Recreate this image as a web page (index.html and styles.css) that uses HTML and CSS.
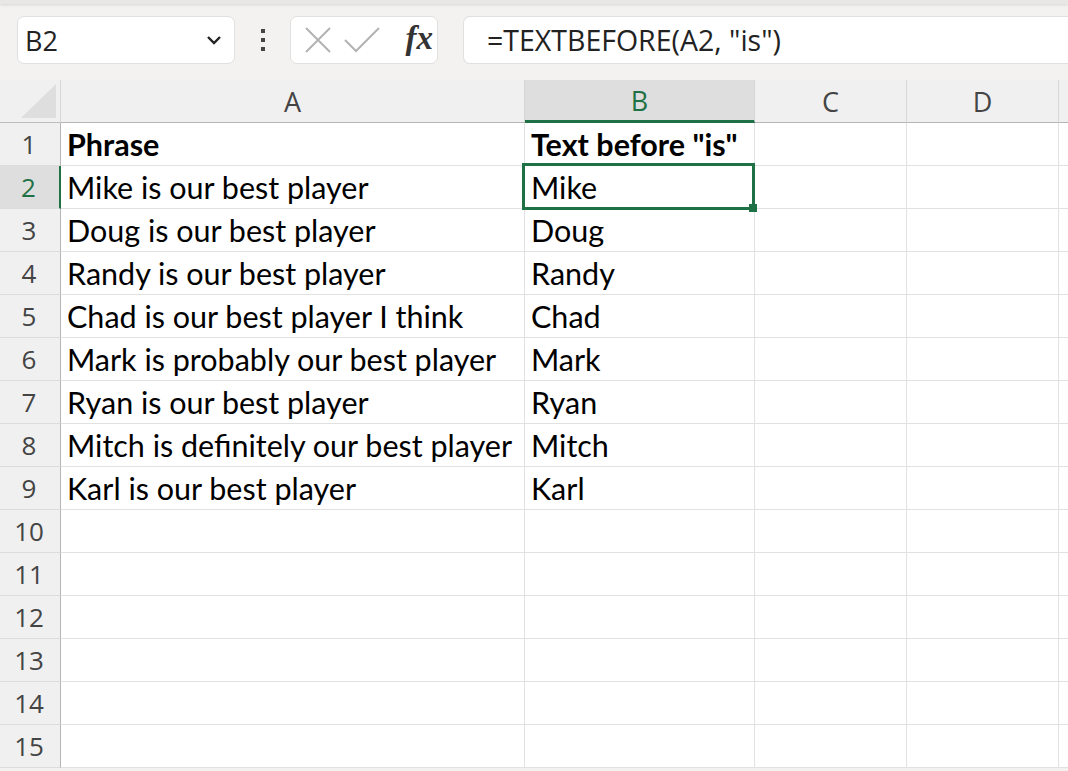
FILE: index.html
```html
<!DOCTYPE html>
<html lang="en">
<head>
  <meta charset="UTF-8">
  <title>TEXTBEFORE</title>
  <link rel="stylesheet" href="styles.css">
</head>
<body>
  <div class="topband"></div>
  <div class="toolbar">
    <div class="namebox">
      <span>B2</span>
      <svg class="chev" width="16" height="10" viewBox="0 0 16 10"><path d="M2 2 L8 8 L14 2" fill="none" stroke="#222" stroke-width="2.4"/></svg>
    </div>
    <div class="dots"><i></i><i></i><i></i></div>
    <div class="fxbox">
      <svg width="30" height="30" viewBox="0 0 30 30"><path d="M3 3 L27 27 M27 3 L3 27" stroke="#b3b3b3" stroke-width="2"/></svg>
      <svg width="38" height="30" viewBox="0 0 38 30"><path d="M2 15 L13 26 L36 3" fill="none" stroke="#b3b3b3" stroke-width="2"/></svg>
      <span class="fx">fx</span>
    </div>
    <div class="formula">=TEXTBEFORE(A2, "is")</div>
  </div>

  <div class="sheet">
    <div class="grid">
      <div class="corner"><div class="tri"></div></div>
      <div class="colh">A</div>
      <div class="colh sel">B</div>
      <div class="colh">C</div>
      <div class="colh">D</div>
      <div class="colh last"></div>

      <div class="rowh">1</div><div class="cell b">Phrase</div><div class="cell b">Text before "is"</div><div class="cell"></div><div class="cell"></div><div class="cell"></div>
      <div class="rowh sel">2</div><div class="cell">Mike is our best player</div><div class="cell">Mike</div><div class="cell"></div><div class="cell"></div><div class="cell"></div>
      <div class="rowh">3</div><div class="cell">Doug is our best player</div><div class="cell">Doug</div><div class="cell"></div><div class="cell"></div><div class="cell"></div>
      <div class="rowh">4</div><div class="cell">Randy is our best player</div><div class="cell">Randy</div><div class="cell"></div><div class="cell"></div><div class="cell"></div>
      <div class="rowh">5</div><div class="cell">Chad is our best player I think</div><div class="cell">Chad</div><div class="cell"></div><div class="cell"></div><div class="cell"></div>
      <div class="rowh">6</div><div class="cell">Mark is probably our best player</div><div class="cell">Mark</div><div class="cell"></div><div class="cell"></div><div class="cell"></div>
      <div class="rowh">7</div><div class="cell">Ryan is our best player</div><div class="cell">Ryan</div><div class="cell"></div><div class="cell"></div><div class="cell"></div>
      <div class="rowh">8</div><div class="cell">Mitch is definitely our best player</div><div class="cell">Mitch</div><div class="cell"></div><div class="cell"></div><div class="cell"></div>
      <div class="rowh">9</div><div class="cell">Karl is our best player</div><div class="cell">Karl</div><div class="cell"></div><div class="cell"></div><div class="cell"></div>
      <div class="rowh">10</div><div class="cell"></div><div class="cell"></div><div class="cell"></div><div class="cell"></div><div class="cell"></div>
      <div class="rowh">11</div><div class="cell"></div><div class="cell"></div><div class="cell"></div><div class="cell"></div><div class="cell"></div>
      <div class="rowh">12</div><div class="cell"></div><div class="cell"></div><div class="cell"></div><div class="cell"></div><div class="cell"></div>
      <div class="rowh">13</div><div class="cell"></div><div class="cell"></div><div class="cell"></div><div class="cell"></div><div class="cell"></div>
      <div class="rowh">14</div><div class="cell"></div><div class="cell"></div><div class="cell"></div><div class="cell"></div><div class="cell"></div>
      <div class="rowh">15</div><div class="cell"></div><div class="cell"></div><div class="cell"></div><div class="cell"></div><div class="cell"></div>
    </div>
    <div class="selbox"><div class="handle"></div></div>
  </div>
</body>
</html>
```

FILE: styles.css
```css
body {
  margin: 0;
  background-color: #f3f2f1;
  font-family: "Open Sans", "Noto Sans", sans-serif;
  overflow: hidden;
  width: 1068px;
  height: 771px;
}
.topband {
  height: 4px;
  background-color: #e9e7e5;
  box-shadow: 0 1px 3px rgba(0, 0, 0, 0.12);
}
.toolbar {
  display: flex;
  align-items: center;
  height: 72px;
  padding-left: 17px;
}
.namebox {
  width: 218px;
  height: 48px;
  box-sizing: border-box;
  background-color: #fff;
  border: 1px solid #e0e0e0;
  border-radius: 7px;
  display: flex;
  align-items: center;
  justify-content: space-between;
  padding: 0 12px 0 7px;
  font-size: 27px;
  color: #222;
}
.dots {
  width: 55px;
  display: flex;
  flex-direction: column;
  align-items: center;
  gap: 5px;
}
.dots i {
  display: block;
  width: 4px;
  height: 4px;
  background-color: #444;
}
.fxbox {
  width: 148px;
  height: 48px;
  box-sizing: border-box;
  background-color: #fff;
  border: 1px solid #e0e0e0;
  border-radius: 7px;
  display: flex;
  align-items: center;
  padding: 0 4px 0 12px;
  gap: 10px;
}
.fx {
  font-family: "Liberation Serif", "DejaVu Serif", serif;
  font-style: italic;
  font-weight: bold;
  font-size: 33px;
  color: #333;
  margin-left: auto;
  letter-spacing: 0;
  padding-bottom: 4px;
}
.formula {
  margin-left: 25px;
  flex: 1;
  height: 48px;
  box-sizing: border-box;
  background-color: #fff;
  border: 1px solid #e0e0e0;
  border-right: none;
  border-radius: 7px 0 0 7px;
  display: flex;
  align-items: center;
  padding-left: 23px;
  font-size: 28.5px;
  color: #222;
}
.sheet {
  position: relative;
  margin-top: 4px;
}
.grid {
  display: grid;
  grid-template-columns: 61px 464px 230px 152px 152px 1fr;
  grid-template-rows: 43px repeat(15, 43px);
  background-color: #fff;
}
.corner {
  background-color: #f0f0f0;
  border-right: 1px solid #d6d6d6;
  border-bottom: 1px solid #bdbdbd;
  position: relative;
}
.tri {
  position: absolute;
  right: 4px;
  bottom: 4px;
  width: 35px;
  height: 34px;
  background-color: #dedede;
  clip-path: polygon(100% 0, 100% 100%, 0 100%);
}
.colh {
  background-color: #f0f0f0;
  border-right: 1px solid #d6d6d6;
  border-bottom: 1px solid #b5b5b5;
  display: flex;
  align-items: center;
  justify-content: center;
  font-size: 27px;
  color: #444;
  box-sizing: border-box;
}
.colh.sel {
  background-color: #dedede;
  color: #1e7145;
  border-bottom: 3px solid #1e7145;
}
.rowh {
  background-color: #f0f0f0;
  border-right: 1px solid #b5b5b5;
  border-bottom: 1px solid #dcdcdc;
  display: flex;
  align-items: center;
  justify-content: center;
  font-size: 26px;
  color: #444;
  box-sizing: border-box;
  padding-right: 2px;
}
.rowh.sel {
  background-color: #dedede;
  color: #1e7145;
  border-right: 2px solid #1e7145;
}
.cell {
  border-right: 1px solid #e1e1e1;
  border-bottom: 1px solid #e1e1e1;
  display: flex;
  align-items: center;
  padding: 0 6px;
  font-family: "Lato", "Carlito", sans-serif;
  font-size: 30.5px;
  color: #000;
  white-space: nowrap;
  box-sizing: border-box;
  overflow: visible;
}
.cell.b {
  font-weight: bold;
}
.selbox {
  position: absolute;
  left: 522px;
  top: 83px;
  width: 233px;
  height: 47px;
  box-sizing: border-box;
  border: 3px solid #1e7145;
}
.handle {
  position: absolute;
  right: -5px;
  bottom: -5px;
  width: 8px;
  height: 8px;
  background-color: #1e7145;
}
```
